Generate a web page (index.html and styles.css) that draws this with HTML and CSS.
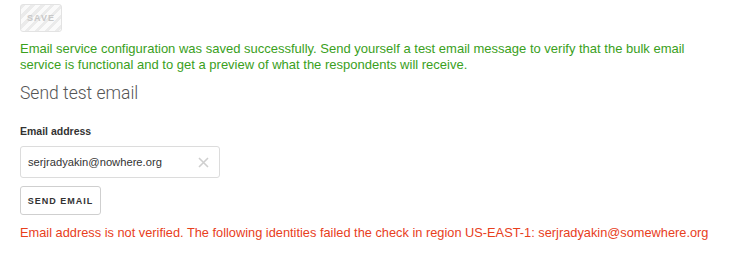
FILE: index.html
```html
<!DOCTYPE html>
<html>
<head>
<meta charset="utf-8">
<link rel="stylesheet" href="styles.css">
</head>
<body>
<div class="page">
  <button class="btn btn-save" disabled>SAVE</button>
  <p class="success">Email service configuration was saved successfully. Send yourself a test email message to verify that the bulk email service is functional and to get a preview of what the respondents will receive.</p>
  <h2 class="title">Send test email</h2>
  <label class="label">Email address</label>
  <div class="input">
    <span class="value">serjradyakin@nowhere.org</span>
    <svg class="clear" width="11" height="11" viewBox="0 0 11 11"><path d="M1 1L10 10M10 1L1 10" stroke="#cfcfcf" stroke-width="1.6" fill="none"/></svg>
  </div>
  <button class="btn btn-send">SEND EMAIL</button>
  <p class="error">Email address is not verified. The following identities failed the check in region US-EAST-1: serjradyakin@somewhere.org</p>
</div>
</body>
</html>
```
FILE: styles.css
```css
html, body { margin: 0; padding: 0; background: #fff; }
.page {
  padding: 4px 20px 0 20px;
  font-family: "Liberation Sans", Arial, sans-serif;
  display: flex;
  flex-direction: column;
  align-items: flex-start;
}
.btn {
  font-family: "Liberation Sans", Arial, sans-serif;
  font-weight: bold;
  font-size: 9px;
  letter-spacing: 1px;
  border-radius: 3px;
  padding: 0;
  margin: 0;
  box-sizing: border-box;
}
.btn-save {
  width: 42px;
  height: 28px;
  color: #c8c8c8;
  border: 1px solid #e3e3e3;
  background: repeating-linear-gradient(135deg, #ebebeb 0 3px, #fafafa 3px 7px);
}
.success {
  margin: 9px 0 0 0;
  color: #3aa01c;
  font-size: 13px;
  line-height: 16px;
  width: 700px;
}
.title {
  margin: 8px 0 0 0;
  font-family: Roboto, sans-serif;
  font-weight: 300;
  font-size: 17.5px;
  line-height: 24px;
  color: #555;
}
.label {
  margin-top: 19px;
  font-size: 10.5px;
  font-weight: bold;
  color: #333;
  line-height: 14px;
}
.input {
  margin-top: 8px;
  width: 200px;
  height: 32px;
  box-sizing: border-box;
  border: 1px solid #dcdcdc;
  border-radius: 3px;
  display: flex;
  align-items: center;
  justify-content: space-between;
  padding: 0 10px 0 7px;
  font-size: 11.2px;
  color: #333;
}
.btn-send {
  margin-top: 8px;
  width: 81px;
  height: 29px;
  color: #333;
  background: #fff;
  border: 1px solid #cfcfcf;
}
.error {
  margin: 10px 0 0 0;
  color: #e8401c;
  font-size: 12.8px;
  line-height: 16px;
  white-space: nowrap;
}
```
